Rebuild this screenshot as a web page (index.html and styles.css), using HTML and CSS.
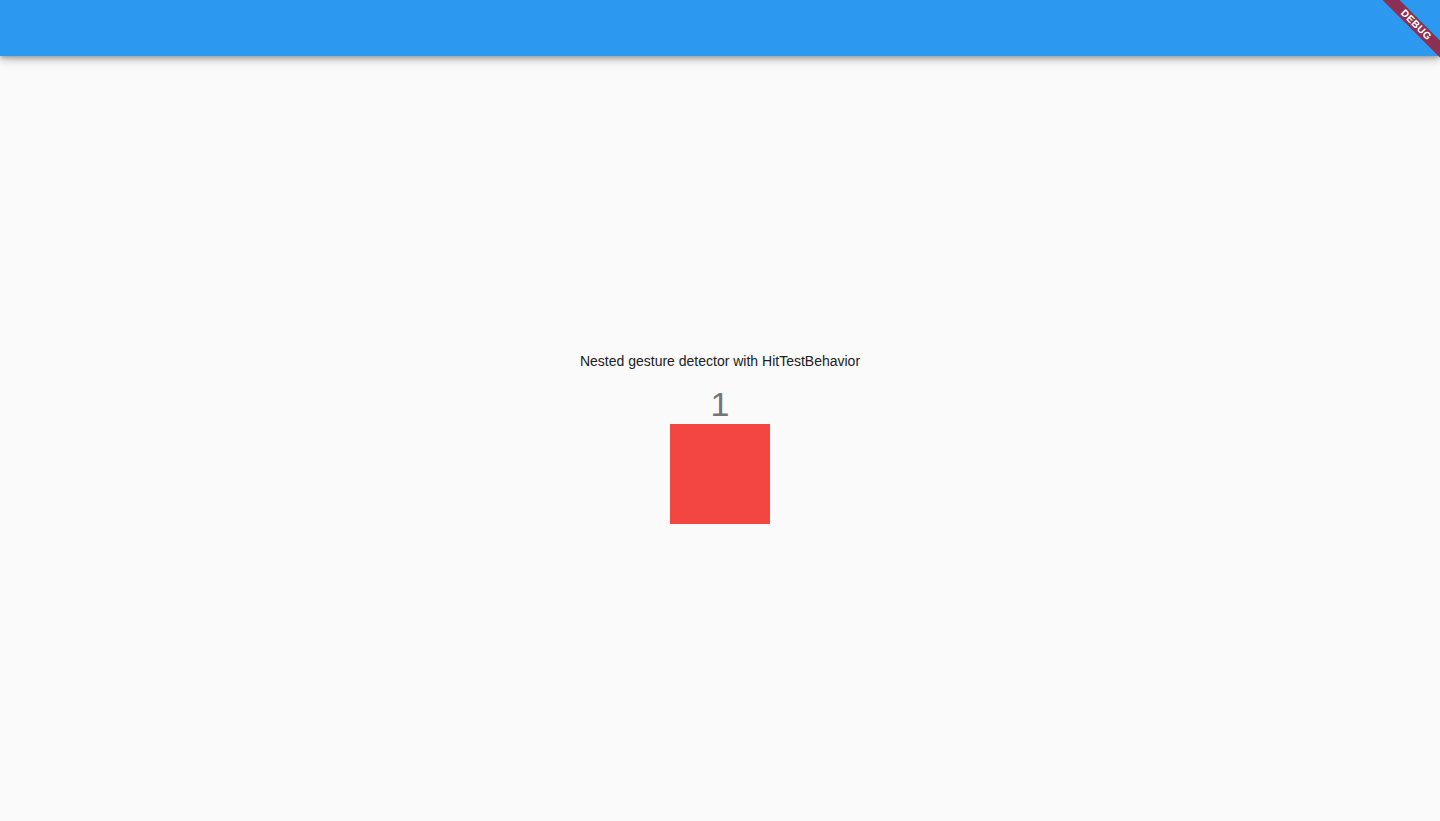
FILE: index.html
```html
<!DOCTYPE html>
<html>
<head>
<meta charset="utf-8">
<link rel="stylesheet" href="styles.css">
</head>
<body>
<div class="app">
  <header class="appbar"></header>
  <main class="content">
    <div class="column">
      <p class="title">Nested gesture detector with HitTestBehavior</p>
      <div class="counter">1</div>
      <div class="box"></div>
    </div>
  </main>
</div>
<div class="banner">DEBUG</div>
</body>
</html>
```
FILE: styles.css
```css
html, body {
  margin: 0;
  padding: 0;
  height: 100%;
  background: #fafafa;
  font-family: "Liberation Sans", Arial, sans-serif;
  overflow: hidden;
}
.app {
  display: flex;
  flex-direction: column;
  height: 821px;
}
.appbar {
  height: 56px;
  flex: 0 0 56px;
  background: #2d98f0;
  box-shadow: 0 2px 4px -1px rgba(0,0,0,.22), 0 4px 6px 0 rgba(0,0,0,.16), 0 2px 14px 0 rgba(0,0,0,.14);
  position: relative;
  z-index: 1;
}
.content {
  flex: 1;
  display: flex;
  align-items: center;
  justify-content: center;
}
.column {
  display: flex;
  flex-direction: column;
  align-items: center;
}
.title {
  margin: 0 0 15px;
  font-size: 14px;
  line-height: 16px;
  color: #202020;
}
.counter {
  font-size: 34px;
  line-height: 40px;
  color: #757575;
}
.box {
  width: 100px;
  height: 100px;
  background: #f44640;
}
.banner {
  position: absolute;
  left: 1356px;
  top: 18.5px;
  width: 120px;
  height: 12px;
  background: #8b3052;
  color: #fff;
  font-size: 10px;
  font-weight: bold;
  line-height: 12px;
  text-align: center;
  letter-spacing: 0.5px;
  transform: rotate(45deg);
  z-index: 2;
}
```
